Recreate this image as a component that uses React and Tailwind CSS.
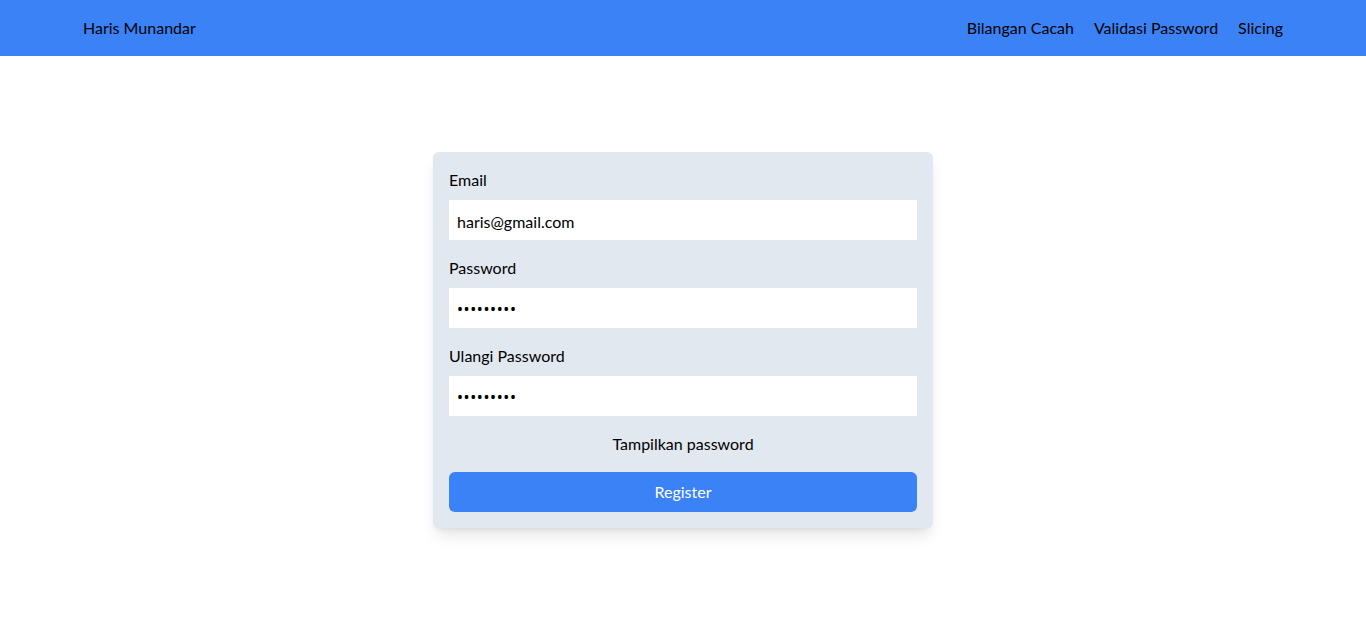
import React from "react";

export default function App() {
  return (
    <div className="min-h-screen bg-white text-black" style={{ fontFamily: 'Lato, "Noto Sans", sans-serif' }}>
      <nav className="h-14 bg-[#3b82f6]">
        <div className="mx-auto flex h-full max-w-[1200px] items-center justify-between">
          <a className="text-base">Haris Munandar</a>
          <ul className="flex gap-5 text-base">
            <li>Bilangan Cacah</li>
            <li>Validasi Password</li>
            <li>Slicing</li>
          </ul>
        </div>
      </nav>
      <div className="flex justify-center pt-24">
        <form className="flex w-[500px] flex-col rounded-md bg-[#e2e8f0] p-4 shadow-lg" onSubmit={(e) => e.preventDefault()}>
          <label className="leading-6">Email</label>
          <input className="mt-2 h-10 bg-white px-2 pt-0.5 outline-none" defaultValue="haris@gmail.com" />
          <label className="mt-4 leading-6">Password</label>
          <input type="password" className="mt-2 h-10 bg-white px-2 pt-0.5 font-['Noto_Sans'] tracking-[0.6px] outline-none" defaultValue="123456789" />
          <label className="mt-4 leading-6">Ulangi Password</label>
          <input type="password" className="mt-2 h-10 bg-white px-2 pt-0.5 font-['Noto_Sans'] tracking-[0.6px] outline-none" defaultValue="123456789" />
          <p className="mt-4 text-center leading-6">Tampilkan password</p>
          <button className="mt-4 h-10 rounded-md bg-[#3b82f6] text-white">Register</button>
        </form>
      </div>
    </div>
  );
}
